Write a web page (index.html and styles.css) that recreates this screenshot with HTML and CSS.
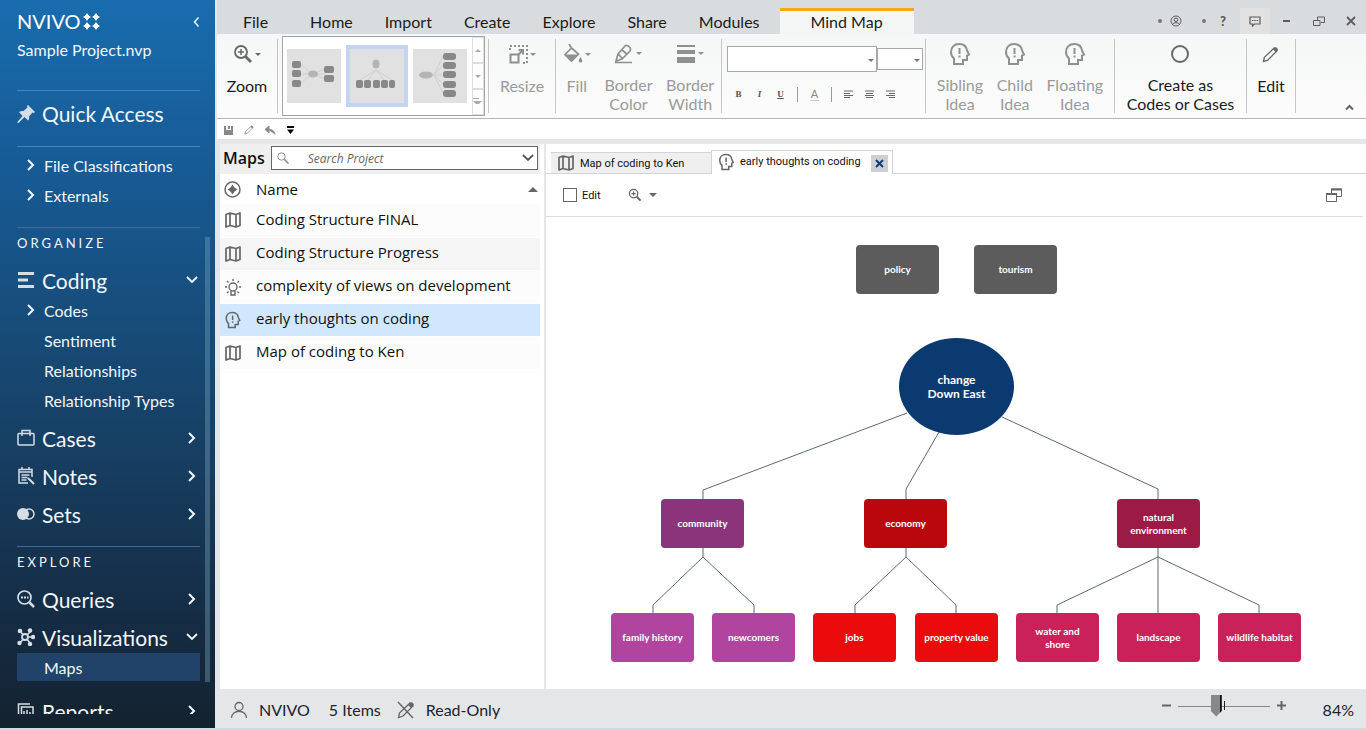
FILE: index.html
```html
<!DOCTYPE html>
<html lang="en">
<head>
    <meta charset="UTF-8">
    <meta name="viewport" content="width=device-width, initial-scale=1.0">
    <title>NVivo - Sample Project.nvp</title>
    <link rel="stylesheet" href="styles.css">
</head>
<body>

<!-- Shared icons -->
<svg class="sprite" aria-hidden="true">
    <symbol id="chevron-right" viewBox="0 0 10 12"><path d="M2 1l5 5-5 5" fill="none" stroke="currentColor" stroke-width="2"/></symbol>
    <symbol id="chevron-down" viewBox="0 0 12 10"><path d="M1 2l5 5 5-5" fill="none" stroke="currentColor" stroke-width="1.8"/></symbol>
    <symbol id="map" viewBox="0 0 18 18"><path d="M2 3.500l4-1.500 6 1.500L16 2v12.500l-4 1.500-6-1.500L2 16zM6 2v12.500M12 3.500V16" fill="none" stroke="currentColor" stroke-width="1.700" stroke-linejoin="round"/></symbol>
    <symbol id="head" viewBox="0 0 22 24"><path d="M5 22v-5.500C2.500 14.500 2 12.500 2 10c0-5 3.500-8 8-8 4.500 0 7.500 2.500 8 6.500l2 4-2 1V18h-4v4z" fill="none" stroke="currentColor" stroke-width="2"/><path d="M10.500 6v6M10.500 13.500v2" stroke="currentColor" stroke-width="2"/></symbol>
    <symbol id="zoom-in" viewBox="0 0 20 20"><circle cx="8" cy="8" r="6" fill="none" stroke="currentColor" stroke-width="1.800"/><path d="M8 5v6M5 8h6" stroke="currentColor" stroke-width="1.500"/><path d="M12.500 12.500L18 18" stroke="currentColor" stroke-width="2.800"/></symbol>
    <symbol id="pencil" viewBox="0 0 18 18"><path d="M1.500 16.500l1-4.500L13 2l3 3L6 15z" fill="none" stroke="currentColor" stroke-width="1.400"/><path d="M11.500 3.500l2-2c1.500-1 4 1.500 3 3l-2 2z" fill="currentColor"/></symbol>
    <symbol id="windows" viewBox="0 0 16 14"><path d="M5.500 5V1h10v7.500H11M.500 5.500h10v8H.500z" fill="none" stroke="currentColor"/><path d="M5 1.500h11M0 6h11" stroke="currentColor" stroke-width="2"/></symbol>
</svg>

<div class="app">
    <div class="main">
        <aside class="sidebar">
            <div class="brand">
                <svg class="logo" viewBox="0 -6 84 30" role="img" aria-label="NVivo">
                    <text class="logo-text" x="0" y="16">NVIVO</text>
                    <g fill="#fff">
                        <path d="M70 0l1.500 2.500L74 4l-2.500 1.500L70 8l-1.500-2.500L66 4l2.500-1.500zM79 0l1.500 2.500L83 4l-2.500 1.500L79 8l-1.500-2.500L75 4l2.500-1.500zM70 9l1.500 2.500L74 13l-2.500 1.500L70 17l-1.500-2.500L66 13l2.500-1.500zM79 9l1.500 2.500L83 13l-2.500 1.500L79 17l-1.500-2.500L75 13l2.500-1.500z"/>
                        <circle cx="70" cy="4" r="2.400"/><circle cx="79" cy="4" r="2.400"/><circle cx="70" cy="13" r="2.400"/><circle cx="79" cy="13" r="2.400"/>
                    </g>
                </svg>
                <button class="collapse" aria-label="Collapse navigation"><svg width="7" height="12" viewBox="0 0 7 12"><path d="M5.500 1.500l-4 4.500 4 4.500" fill="none" stroke="currentColor" stroke-width="1.500"/></svg></button>
            </div>
            <div class="project">Sample Project.nvp</div>
            <a class="nav-head quick" href="#">
                <svg class="nav-icon" viewBox="0 0 18 18"><path d="M11 0l7 7-1.500 1-1-.500-3.500 4c.500 1.500 0 3-1 4L7.500 12 1.500 18 0 17.500l5.500-6.500L2 7c1.500-1 3-1.200 4.500-1L10.500 2.500 10 1z" fill="currentColor"/></svg>
                Quick Access
            </a>
            <nav class="nav">
                <a class="nav-sub" href="#"><svg class="arrow"><use href="#chevron-right"/></svg>File Classifications</a>
                <a class="nav-sub" href="#"><svg class="arrow"><use href="#chevron-right"/></svg>Externals</a>

                <h2 class="nav-title">ORGANIZE</h2>
                <a class="nav-head open" href="#">
                    <svg class="nav-icon" viewBox="0 0 18 18"><path d="M1 2.500h16M1 9h10M1 15.500h16" stroke="currentColor" stroke-width="3"/></svg>
                    Coding<svg class="toggle"><use href="#chevron-down"/></svg>
                </a>
                <a class="nav-sub" href="#"><svg class="arrow"><use href="#chevron-right"/></svg>Codes</a>
                <a class="nav-sub" href="#">Sentiment</a>
                <a class="nav-sub" href="#">Relationships</a>
                <a class="nav-sub" href="#">Relationship Types</a>
                <a class="nav-head" href="#">
                    <svg class="nav-icon" viewBox="0 0 18 18" fill="none" stroke="currentColor" stroke-width="1.500"><rect x="1" y="4.500" width="16" height="11.500" rx="1"/><path d="M5 7V1.500h8V7"/></svg>
                    Cases<svg class="toggle"><use href="#chevron-right"/></svg>
                </a>
                <a class="nav-head" href="#">
                    <svg class="nav-icon" viewBox="0 0 18 18" fill="none" stroke="currentColor" stroke-width="1.500"><path d="M15 10V2.500H2V16h9M2 5h13M4.500 8h8M4.500 10.500h6M4.500 13h5M5 0v3M12 0v3"/><path d="M11 11l6 6" stroke-width="2"/></svg>
                    Notes<svg class="toggle"><use href="#chevron-right"/></svg>
                </a>
                <a class="nav-head" href="#">
                    <svg class="nav-icon" viewBox="0 0 18 18"><circle cx="12" cy="9" r="5" fill="none" stroke="currentColor" stroke-width="1.500"/><circle cx="6" cy="9" r="6" fill="currentColor"/></svg>
                    Sets<svg class="toggle"><use href="#chevron-right"/></svg>
                </a>

                <h2 class="nav-title">EXPLORE</h2>
                <a class="nav-head" href="#">
                    <svg class="nav-icon" viewBox="0 0 18 18"><circle cx="7.500" cy="7.500" r="6.500" fill="none" stroke="currentColor" stroke-width="1.700"/><path d="M4 7.500h2M7 7.500h2M10 7.500h1.500" stroke="currentColor" stroke-width="2"/><path d="M12.500 12.500l4.500 4.500" stroke="currentColor" stroke-width="2.500"/></svg>
                    Queries<svg class="toggle"><use href="#chevron-right"/></svg>
                </a>
                <a class="nav-head open" href="#">
                    <svg class="nav-icon" viewBox="0 0 18 18"><path d="M8 9L3 3M8 9l6-6M8 9h8M8 9l6 7M8 9l-5 6" stroke="currentColor" stroke-width="1.500"/><circle cx="8" cy="9" r="3" fill="#17344f" stroke="currentColor" stroke-width="1.800"/><g fill="currentColor"><circle cx="3" cy="3" r="2.300"/><circle cx="13" cy="2.500" r="2.300"/><circle cx="16" cy="9" r="2.200"/><circle cx="13" cy="16" r="2.200"/><circle cx="2.500" cy="15" r="2.200"/></g></svg>
                    Visualizations<svg class="toggle"><use href="#chevron-down"/></svg>
                </a>
                <a class="nav-sub active" href="#">Maps</a>
                <a class="nav-head" href="#">
                    <svg class="nav-icon" viewBox="0 0 18 18" fill="none" stroke="currentColor" stroke-width="1.500"><path d="M1.500 13V2H13M4.500 5H16v11H4.500zM7 14V9M10 14V8M13 14v-4"/></svg>
                    Reports<svg class="toggle"><use href="#chevron-right"/></svg>
                </a>
            </nav>
            <div class="nav-scrollbar"></div>
        </aside>

        <div class="workspace">
            <header class="menubar">
                <button class="menu file">File</button>
                <button class="menu">Home</button>
                <button class="menu">Import</button>
                <button class="menu">Create</button>
                <button class="menu">Explore</button>
                <button class="menu">Share</button>
                <button class="menu">Modules</button>
                <button class="menu current">Mind Map</button>
                <div class="window-tools">
                    <span class="dot"></span>
                    <button class="tool account" aria-label="Account"><svg width="12" height="12" viewBox="0 0 12 12" fill="none" stroke="currentColor"><circle cx="6" cy="6" r="5"/><circle cx="6" cy="4.800" r="1.800"/><path d="M2.500 9.500c1.500-2.500 5.500-2.500 7 0"/></svg></button>
                    <span class="dot"></span>
                    <button class="tool help" aria-label="Help">?</button>
                    <button class="tool feedback" aria-label="Feedback"><svg width="12" height="11" viewBox="0 0 12 11" fill="none" stroke="currentColor" stroke-width="1.200"><path d="M1 1h10v7H5.500L3.500 10V8H1z"/><path d="M3 4.500h1.500M5.300 4.500h1.500M7.600 4.500h1.500"/></svg></button>
                    <button class="tool" aria-label="Minimize"><svg width="8" height="8" viewBox="0 0 8 8"><path d="M0 4h7" stroke="currentColor" stroke-width="2"/></svg></button>
                    <button class="tool" aria-label="Restore"><svg width="12" height="11" viewBox="0 0 12 11" fill="none" stroke="currentColor"><path d="M4.500 4V1h7v5.500H8M.500 4.500H7v5H.500z"/></svg></button>
                    <button class="tool" aria-label="Close"><svg width="10" height="10" viewBox="0 0 10 10"><path d="M1 1l8 8M9 1L1 9" stroke="currentColor" stroke-width="1.800"/></svg></button>
                </div>
            </header>

            <div class="ribbon">
                <div class="group zoom">
                    <button class="command"><span class="glyph"><svg width="20" height="20"><use href="#zoom-in"/></svg><i class="caret"></i></span>Zoom</button>
                </div>
                <div class="group layouts">
                    <div class="gallery">
                        <button class="layout" aria-label="Left and right layout">
                            <svg viewBox="0 0 54 54"><path d="M14 15l11 10 13-5M14 25h24M14 34l11-9 13 5" fill="none" stroke="#d0d0d0"/><ellipse cx="26" cy="25" rx="5" ry="3.500" fill="#b4b4b4"/><g fill="#888"><rect x="5" y="12" width="9" height="7" rx="2"/><rect x="5" y="21" width="9" height="7" rx="2"/><rect x="5" y="31" width="9" height="7" rx="2"/><rect x="37" y="17" width="10" height="7" rx="2"/><rect x="37" y="26" width="10" height="7" rx="2"/></g></svg>
                        </button>
                        <button class="layout selected" aria-label="Top down layout">
                            <svg viewBox="0 0 54 54"><path d="M10 31l16-10 16 10M18 31l8-10 8 10" fill="none" stroke="#d0d0d0"/><ellipse cx="26" cy="15" rx="3.500" ry="4.500" fill="#b4b4b4"/><g fill="#888"><rect x="6" y="31" width="7" height="8" rx="2"/><rect x="14" y="31" width="7" height="8" rx="2"/><rect x="23" y="31" width="7" height="8" rx="2"/><rect x="31" y="31" width="7" height="8" rx="2"/><rect x="39" y="31" width="6" height="8" rx="2"/></g></svg>
                        </button>
                        <button class="layout" aria-label="Left to right layout">
                            <svg viewBox="0 0 54 54"><path d="M30 7l-9 19 9 18M30 16l-9 10 9 9M20 26h10" fill="none" stroke="#d0d0d0"/><ellipse cx="13" cy="26" rx="7" ry="3.500" fill="#b4b4b4"/><g fill="#888"><rect x="30" y="4" width="13" height="7" rx="3"/><rect x="30" y="13" width="13" height="7" rx="3"/><rect x="30" y="22" width="13" height="7" rx="3"/><rect x="30" y="32" width="13" height="7" rx="3"/><rect x="30" y="41" width="13" height="7" rx="3"/></g></svg>
                        </button>
                        <div class="gallery-nav">
                            <button aria-label="Previous layouts"><i class="caret up"></i></button>
                            <button aria-label="Next layouts"><i class="caret"></i></button>
                            <button class="more" aria-label="All layouts"><i class="caret"></i></button>
                        </div>
                    </div>
                </div>
                <div class="group resize">
                    <button class="command" disabled><span class="glyph"><svg width="19" height="19" viewBox="0 0 19 19" fill="none" stroke="currentColor" stroke-width="2"><path d="M1 5V1h17v17h-6" stroke-dasharray="2 2"/><path d="M1.500 9.500h8v8h-8z"/><path d="M9 10l4-4M9.500 5H14v4.500"/></svg><i class="caret"></i></span>Resize</button>
                </div>
                <div class="group shape">
                    <button class="command" disabled><span class="glyph"><svg width="20" height="20" viewBox="0 0 20 20"><path d="M6 0l3 5M8.500 4L2 10.500 8.500 17l7-7z" fill="none" stroke="currentColor" stroke-width="1.700"/><path d="M1 10.500h14.500L8.500 18zM17.500 13c3 4.500 1.500 5.500 0 5.500s-3-1 0-5.500z" fill="currentColor"/></svg><i class="caret"></i></span>Fill</button>
                    <button class="command" disabled><span class="glyph"><svg width="20" height="20" viewBox="0 0 20 20" fill="none" stroke="currentColor" stroke-width="1.700"><path d="M2 17l2-7 7-8c2-2 7 2 5 5l-8 8zM4 10l5 5M8 6l5.500 4.500M1 18.500h17"/></svg><i class="caret"></i></span>Border<br>Color</button>
                    <button class="command" disabled><span class="glyph"><svg width="20" height="20" viewBox="0 0 20 20" fill="currentColor"><path d="M1 1h18v2H1zM1 6h18v4H1zM1 13h18v6H1z"/></svg><i class="caret"></i></span>Border<br>Width</button>
                </div>
                <div class="group font">
                    <div class="font-row">
                        <span class="combo name"><select aria-label="Font"><option></option></select><i class="caret"></i></span>
                        <span class="combo size"><select aria-label="Font size"><option></option></select><i class="caret"></i></span>
                    </div>
                    <div class="font-row format">
                        <button class="bold">B</button>
                        <button class="italic">I</button>
                        <button class="underline">U</button>
                        <i class="rule"></i>
                        <button class="color">A</button>
                        <i class="rule"></i>
                        <button aria-label="Align left"><svg width="9" height="8"><path d="M0 1h9M0 3.500h6M0 5.500h9M0 7.500h6" stroke="#666"/></svg></button>
                        <button aria-label="Align center"><svg width="9" height="8"><path d="M0 1h9M1 3.500h7M0 5.500h9M1 7.500h7" stroke="#666"/></svg></button>
                        <button aria-label="Align right"><svg width="9" height="8"><path d="M0 1h9M3 3.500h6M0 5.500h9M3 7.500h6" stroke="#666"/></svg></button>
                    </div>
                </div>
                <div class="group ideas">
                    <button class="command" disabled><span class="glyph"><svg width="22" height="24"><use href="#head"/></svg></span>Sibling<br>Idea</button>
                    <button class="command" disabled><span class="glyph"><svg width="22" height="24"><use href="#head"/></svg></span>Child<br>Idea</button>
                    <button class="command" disabled><span class="glyph"><svg width="22" height="24"><use href="#head"/></svg></span>Floating<br>Idea</button>
                </div>
                <div class="group create">
                    <button class="command"><span class="glyph"><svg width="20" height="20"><circle cx="10" cy="10" r="8" fill="none" stroke="currentColor" stroke-width="2"/></svg></span>Create as<br>Codes or Cases</button>
                </div>
                <div class="group edit">
                    <button class="command"><span class="glyph"><svg width="17" height="17"><use href="#pencil"/></svg></span>Edit</button>
                </div>
                <button class="ribbon-toggle" aria-label="Collapse ribbon"><svg width="9" height="7" viewBox="0 0 9 7"><path d="M1 5.500L4.500 2 8 5.500" fill="none" stroke="currentColor" stroke-width="2"/></svg></button>
            </div>

            <div class="quickbar">
                <button aria-label="Save"><svg width="9" height="9" viewBox="0 0 9 9"><path d="M0 0h2v4h5V0h2v9H0z" fill="currentColor"/><path d="M4 0h2v3H4z" fill="currentColor"/></svg></button>
                <button aria-label="Edit"><svg width="10" height="10"><use href="#pencil"/></svg></button>
                <button aria-label="Undo"><svg width="11" height="9" viewBox="0 0 11 9"><path d="M4 0L0 3.500 4 7zM3 3.500c4-.500 6.500 1.500 7 5" fill="currentColor" stroke="currentColor" fill-rule="evenodd"/></svg></button>
                <button class="customize" aria-label="Customize toolbar"><svg width="7" height="8" viewBox="0 0 7 8"><path d="M0 0h7v2H0zM0 3.500h7L3.500 8z" fill="currentColor"/></svg></button>
            </div>

            <div class="panes">
                <section class="list-pane">
                    <form class="list-head">
                        <label for="search">Maps</label>
                        <div class="search">
                            <svg width="12" height="12" viewBox="0 0 12 12" fill="none" stroke="#888"><circle cx="4.500" cy="4.500" r="3.700"/><path d="M7.500 7.500l4 4" stroke-width="1.500"/></svg>
                            <input type="search" id="search" placeholder="Search Project">
                            <button type="button" aria-label="Search options"><svg width="12" height="10"><use href="#chevron-down"/></svg></button>
                        </div>
                    </form>
                    <table class="items">
                        <thead>
                            <tr>
                                <th class="icon"><svg width="17" height="17" viewBox="0 0 17 17"><circle cx="8.500" cy="8.500" r="7.500" fill="none" stroke="currentColor" stroke-width="1.500"/><path d="M8.500 3.500l2 3 3 2-3 2-2 3-2-3-3-2 3-2z" fill="currentColor"/></svg></th>
                                <th>Name<i class="caret up"></i></th>
                            </tr>
                        </thead>
                        <tbody>
                            <tr><td class="icon"><svg width="18" height="18"><use href="#map"/></svg></td><td>Coding Structure FINAL</td></tr>
                            <tr class="alt"><td class="icon"><svg width="18" height="18"><use href="#map"/></svg></td><td>Coding Structure Progress</td></tr>
                            <tr><td class="icon"><svg width="18" height="18" viewBox="0 0 18 18" fill="none" stroke="currentColor" stroke-width="1.400"><circle cx="9" cy="9" r="4"/><path d="M7 13v4h4v-4M9 1v2M1 9h2M15 9h2M3 3l1.500 1.500M15 3l-1.500 1.500M3 15l1.500-1.500M15 15l-1.500-1.500"/></svg></td><td>complexity of views on development</td></tr>
                            <tr class="selected"><td class="icon"><svg width="18" height="18"><use href="#head"/></svg></td><td>early thoughts on coding</td></tr>
                            <tr><td class="icon"><svg width="18" height="18"><use href="#map"/></svg></td><td>Map of coding to Ken</td></tr>
                        </tbody>
                    </table>
                </section>

                <section class="detail-pane">
                    <div class="doc-tabs">
                        <div class="doc-tab"><svg width="18" height="18"><use href="#map"/></svg><a href="#">Map of coding to Ken</a></div>
                        <div class="doc-tab current"><svg width="17" height="18"><use href="#head"/></svg><a href="#">early thoughts on coding</a><button aria-label="Close tab"><svg width="9" height="9" viewBox="0 0 9 9"><path d="M1 1l7 7M8 1L1 8" stroke="#0d3a80" stroke-width="2"/></svg></button></div>
                    </div>
                    <div class="doc-tools">
                        <label><input type="checkbox">Edit</label>
                        <button class="doc-zoom" aria-label="Zoom"><svg width="14" height="14"><use href="#zoom-in"/></svg><i class="caret"></i></button>
                        <button class="undock" aria-label="Undock"><svg width="16" height="14"><use href="#windows"/></svg></button>
                    </div>
                    <div class="canvas">
                        <svg class="links" width="820" height="470" fill="none" stroke="#5b6b70">
                            <path d="M361 196L157 273v10M393 215l-33 57v11M456 200l156 72v11"/>
                            <path d="M157 331v9l-50 48v8M157 340l51 48v8"/>
                            <path d="M360 331v9l-51 48v8M360 340l50 48v8"/>
                            <path d="M612 331v65M612 340l-101 48v8M612 340l101 48v8"/>
                        </svg>
                        <div class="node grey policy">policy</div>
                        <div class="node grey tourism">tourism</div>
                        <div class="node root">change<br>Down East</div>
                        <div class="node purple community">community</div>
                        <div class="node red economy">economy</div>
                        <div class="node crimson natural">natural<br>environment</div>
                        <div class="node leaf orchid family">family history</div>
                        <div class="node leaf orchid newcomers">newcomers</div>
                        <div class="node leaf scarlet jobs">jobs</div>
                        <div class="node leaf scarlet property">property value</div>
                        <div class="node leaf rose water">water and<br>shore</div>
                        <div class="node leaf rose landscape">landscape</div>
                        <div class="node leaf rose wildlife">wildlife habitat</div>
                    </div>
                </section>
            </div>

            <footer class="statusbar">
                <svg width="18" height="18" viewBox="0 0 18 18" fill="none" stroke="currentColor" stroke-width="1.300"><circle cx="9" cy="5.500" r="4"/><path d="M1.500 17c0-9 15-9 15 0"/></svg>
                <span class="user">NVIVO</span>
                <span class="count">5 Items</span>
                <svg width="18" height="18" viewBox="0 0 18 18"><path d="M1.500 16.500l1-4.500L13 2l3 3L6 15z" fill="none" stroke="currentColor" stroke-width="1.300"/><path d="M11 4l2.500-2.500c1.500-1 4 1.500 3 3L14 7z" fill="currentColor"/><path d="M1 1l15 16" stroke="currentColor" stroke-width="1.500"/></svg>
                <span class="mode">Read-Only</span>
                <div class="zoom-bar">
                    <button aria-label="Zoom out"><svg width="9" height="9"><path d="M0 4.500h9" stroke="currentColor" stroke-width="2"/></svg></button>
                    <input type="range" aria-label="Zoom level" min="0" max="100" value="41">
                    <button aria-label="Zoom in"><svg width="9" height="9"><path d="M0 4.500h9M4.500 0v9" stroke="currentColor" stroke-width="2"/></svg></button>
                    <output>84%</output>
                </div>
            </footer>
        </div>
    </div>
    <div class="edge"></div>
</div>

</body>
</html>
```

FILE: styles.css
```css
* {
    box-sizing: border-box;
}

body {
    margin: 0;
    font-family: Lato, sans-serif;
    font-size: 16px;
    color: #1b1b1b;
}

button {
    padding: 0;
    border: none;
    background: none;
    font: inherit;
    color: inherit;
    cursor: pointer;
}

a {
    color: inherit;
    text-decoration: none;
}

svg {
    display: block;
    flex-shrink: 0;
}

.sprite {
    display: none;
}

.app {
    display: flex;
    flex-direction: column;
    height: 100vh;
    overflow: hidden;
}

.main {
    display: flex;
    flex: 1;
    min-height: 0;
}

.edge {
    height: 2px;
    background-color: #c9dbe4;
}

.caret {
    border: 3px solid transparent;
    border-top-color: currentColor;
    border-bottom: 0;
}

.caret.up {
    border-top: 0;
    border-bottom: 3px solid currentColor;
}

/* Sidebar */
.sidebar {
    position: relative;
    display: flex;
    flex-direction: column;
    width: 215px;
    flex-shrink: 0;
    padding: 7px 15px 14px 17px;
    background: linear-gradient(#186cae, #175a94 24%, #174872 50%, #152c44 85%, #14222f);
    color: #f2f6fa;
}

.brand {
    display: flex;
    justify-content: space-between;
    align-items: center;
    height: 30px;
}

.logo {
    width: 84px;
    height: 30px;
}

.logo-text {
    font-size: 20px;
    font-weight: 400;
    fill: #fff;
}

.project {
    margin-top: 3px;
    height: 51px;
    line-height: 20px;
    border-bottom: 1px solid #4486bd;
}

.nav-head {
    display: flex;
    align-items: center;
    gap: 7px;
    height: 30px;
    margin-top: 8px;
    font-size: 21px;
}

.nav-head.quick {
    height: 56px;
    margin: 0;
    padding-bottom: 10px;
    border-bottom: 1px solid #4486bd;
    flex-shrink: 0;
}

.nav-icon {
    width: 18px;
    height: 18px;
    color: #d6dde5;
}

.toggle {
    width: 12px;
    height: 12px;
    margin: 0 2px 0 auto;
}

.nav {
    flex: 1;
    min-height: 0;
    padding-top: 3px;
    overflow: hidden;
}

.nav-sub {
    display: flex;
    align-items: center;
    height: 30px;
    padding-left: 27px;
}

.nav-sub .arrow {
    width: 10px;
    height: 12px;
    margin: 0 8px 0 -18px;
}

.nav-sub.active {
    height: 28px;
    margin: 1px 0 15px;
    background-color: #21436a;
}

.nav-title {
    margin: 17px 0 13px;
    padding-top: 6px;
    border-top: 1px solid #3d6d95;
    font-size: 13px;
    font-weight: 400;
    line-height: 18px;
    letter-spacing: 3px;
}

.nav-scrollbar {
    position: absolute;
    top: 237px;
    right: 5px;
    bottom: 46px;
    width: 5px;
    background-color: rgba(120, 165, 190, 0.4);
}

/* Menu bar */
.workspace {
    display: flex;
    flex-direction: column;
    flex: 1;
    min-width: 0;
    background-color: #e5e6e8;
    border-left: 2px solid #e5e6e8;
}

.menubar {
    display: flex;
    height: 34px;
    padding-left: 10px;
    background-color: #d9dcdf;
}

.menu {
    padding: 8px 16px 0;
}

.menu.file {
    margin-right: 10px;
}

.menu.current {
    height: 26px;
    margin: 8px 0 0 4px;
    padding: 0 31px 2px;
    background-color: #f4f6f6;
    border-top: 3px solid #fba60f;
}

.window-tools {
    display: flex;
    align-items: center;
    margin-left: auto;
    padding: 8px 0 0;
    color: #5c5c5c;
}

.dot {
    width: 4px;
    height: 4px;
    border-radius: 50%;
    background-color: #777;
}

.tool {
    display: flex;
    align-items: center;
    justify-content: center;
    width: 30px;
    height: 26px;
    margin-left: 2px;
}

.tool.account {
    width: 24px;
    margin-right: 14px;
}

.tool.help {
    font-size: 13px;
    font-weight: 900;
}

.tool.feedback {
    background-color: #e1e1e1;
}

/* Ribbon */
.ribbon {
    display: flex;
    height: 85px;
    padding: 5px 0;
    background: linear-gradient(#f5f6f6, #fcfcfc);
    border-bottom: 1px solid #b4b4b4;
}

.group {
    display: flex;
    justify-content: space-around;
    height: 74px;
    border-right: 1px solid #c6c6c6;
}

.command {
    display: flex;
    flex-direction: column;
    align-items: center;
    line-height: 19px;
}

.command:disabled {
    color: #9a9a9a;
}

.glyph {
    display: flex;
    align-items: center;
    justify-content: center;
    gap: 2px;
    height: 30px;
    margin-bottom: 7px;
    color: #686868;
}

.command:disabled .glyph {
    color: #8f8f8f;
}

.group.zoom { width: 61px; }
.group.resize { width: 67px; }
.group.shape { width: 166px; }
.group.ideas { width: 189px; padding: 0 4px; }
.group.create { width: 132px; }
.group.edit { width: 49px; }

.layouts {
    width: 211px;
}

.gallery {
    display: flex;
    align-items: center;
    gap: 4px;
    width: 203px;
    height: 80px;
    margin-top: -3px;
    padding-left: 3px;
    background-color: #fff;
    border: 1px solid #a5a5a5;
}

.layout {
    border: 1px solid transparent;
}

.layout svg {
    width: 54px;
    height: 54px;
    background-color: #e1e1e1;
}

.layout.selected {
    border: 4px solid #c3d5f0;
}

.gallery-nav {
    display: flex;
    flex-direction: column;
    align-self: stretch;
    flex: 1;
    color: #a9a9a9;
}

.gallery-nav button {
    display: flex;
    flex: 1;
    align-items: center;
    justify-content: center;
    border: 1px solid #dedede;
}

.gallery-nav .more .caret::before {
    content: "";
    display: block;
    width: 6px;
    height: 1px;
    margin: -6px 0 0 -3px;
    background-color: currentColor;
}

.group.font {
    display: block;
    width: 204px;
    padding: 7px 0 0 5px;
}

.font-row {
    display: flex;
    align-items: center;
}

.combo {
    position: relative;
    display: flex;
    color: #777;
}

.combo select {
    width: 100%;
    height: 26px;
    appearance: none;
    background-color: #fff;
    border: 1px solid #a8a8a8;
    border-radius: 0;
}

.combo.name { width: 150px; }
.combo.size { width: 46px; }
.combo.size select { height: 22px; }

.combo .caret {
    position: absolute;
    right: 3px;
    top: 50%;
}

.format {
    height: 44px;
    padding-left: 7px;
    gap: 12px;
    font-family: "Liberation Serif", serif;
    font-size: 9px;
    color: #555;
}

.format button {
    min-width: 9px;
}

.format .bold { font-weight: bold; }
.format .italic { font-style: italic; font-weight: bold; }
.format .underline { font-weight: bold; text-decoration: underline; }
.format .color { font-family: Lato, sans-serif; font-size: 11px; color: #888; border-bottom: 1px solid #ccc; }

.rule {
    height: 15px;
    border-left: 1px solid #999;
}

.ribbon-toggle {
    align-self: flex-end;
    margin: 0 12px 2px auto;
    color: #666;
}

.quickbar {
    display: flex;
    align-items: center;
    gap: 11px;
    height: 20px;
    padding: 2px 0 0 7px;
    background-color: #fff;
    color: #888;
}

.quickbar .customize {
    color: #000;
}

/* List of maps */
.panes {
    display: flex;
    flex: 1;
    gap: 2px;
    min-height: 0;
    padding: 5px 0 0 3px;
}

.list-pane {
    width: 324px;
    flex-shrink: 0;
    padding-right: 4px;
    background-color: #fff;
    font-family: "Open Sans", sans-serif;
    font-size: 15px;
    color: #111;
}

.list-head {
    display: flex;
    align-items: center;
    gap: 6px;
    height: 30px;
    padding: 0 2px 2px 3px;
    background-color: #efefef;
    font-size: 16px;
    font-weight: 600;
}

.search {
    display: flex;
    flex: 1;
    align-items: center;
    height: 24px;
    padding: 0 3px 0 5px;
    background-color: #fff;
    border: 1px solid #666;
    color: #555;
}

.search input {
    flex: 1;
    min-width: 0;
    padding: 0 0 0 19px;
    border: none;
    outline: none;
    background: none;
    font-family: "Open Sans", sans-serif;
    font-size: 12px;
    font-style: italic;
}

.search input::placeholder {
    color: #666;
}

.items {
    width: 100%;
    border-collapse: collapse;
}

.items th {
    height: 30px;
    padding: 0;
    font-weight: 400;
    text-align: left;
}

.items th .caret {
    float: right;
    margin: 8px 2px 0 0;
    border-width: 0 5px 5px;
    color: #666;
}

.items td {
    height: 33px;
    padding: 0 0 3px;
    background-color: #fcfcfc;
    border-bottom: 1px solid #fff;
}

.items .alt td {
    background-color: #f5f5f5;
}

.items .selected td {
    background-color: #d1e7fd;
}

.items .icon {
    width: 36px;
    padding: 0 0 0 4px;
    color: #666;
}

/* Open documents */
.detail-pane {
    display: flex;
    flex-direction: column;
    flex: 1;
    min-width: 0;
    background-color: #fff;
    font-family: Roboto, sans-serif;
    font-size: 11px;
    color: #111;
}

.doc-tabs {
    display: flex;
    align-items: flex-end;
    height: 30px;
    padding-left: 5px;
    border-bottom: 1px solid #d4d4d4;
}

.doc-tab {
    display: flex;
    align-items: center;
    gap: 5px;
    width: 160px;
    height: 21px;
    padding-left: 6px;
    background-color: #efefef;
    border-top: 1px solid #d4d4d4;
    white-space: nowrap;
}

.doc-tab svg {
    color: #666;
}

.doc-tab.current {
    width: 182px;
    height: 24px;
    margin-bottom: -1px;
    padding: 0 4px 2px 6px;
    background-color: #fff;
    border: 1px solid #d4d4d4;
    border-bottom: none;
}

.doc-tab button {
    margin: 3px 0 0 auto;
    padding: 4px;
    background-color: #cfcfcf;
}

.doc-tools {
    display: flex;
    align-items: center;
    height: 43px;
    padding: 0 21px 0 17px;
    border-bottom: 1px solid #dcdcdc;
    margin-right: 3px;
    color: #666;
}

.doc-tools label {
    display: flex;
    align-items: center;
    gap: 5px;
    color: #111;
}

.doc-tools input {
    width: 14px;
    height: 14px;
    margin: 0;
    appearance: none;
    border: 1px solid #666;
}

.doc-zoom {
    display: flex;
    align-items: center;
    gap: 7px;
    margin-left: 27px;
}

.doc-zoom .caret {
    border-width: 4px 4px 0;
}

.undock {
    margin-left: auto;
}

/* Mind map */
.canvas {
    position: relative;
    flex: 1;
    overflow: hidden;
}

.links {
    position: absolute;
    top: 0;
    left: 0;
}

.node {
    position: absolute;
    display: flex;
    align-items: center;
    justify-content: center;
    width: 83px;
    height: 49px;
    border-radius: 4px;
    font-family: Lato, sans-serif;
    font-size: 10px;
    font-weight: 700;
    line-height: 13px;
    text-align: center;
    color: #fff;
}

.node.root {
    top: 121px;
    left: 353px;
    width: 115px;
    height: 97px;
    border-radius: 50%;
    background-color: #0b3a70;
    font-size: 12px;
    line-height: 14px;
}

.leaf { top: 396px; }

.grey { background-color: #5c5c5c; }
.purple { background-color: #8b347c; }
.red { background-color: #ba070b; }
.crimson { background-color: #9b1a46; }
.orchid { background-color: #b0449e; }
.scarlet { background-color: #eb0a0c; }
.rose { background-color: #ca215b; }

.policy { top: 28px; left: 310px; }
.tourism { top: 28px; left: 428px; }
.community { top: 282px; left: 115px; }
.economy { top: 282px; left: 318px; }
.natural { top: 282px; left: 571px; }
.family { left: 65px; }
.newcomers { left: 166px; }
.jobs { left: 267px; }
.property { left: 369px; }
.water { left: 470px; }
.landscape { left: 571px; }
.wildlife { left: 672px; }

/* Status bar */
.statusbar {
    display: flex;
    align-items: center;
    height: 39px;
    padding: 2px 12px 0 13px;
    color: #1b2430;
}

.statusbar svg {
    color: #666;
}

.user { margin: 0 19px 0 11px; }
.count { margin-right: 16px; }
.mode { margin-left: 11px; }

.zoom-bar {
    display: flex;
    align-items: center;
    gap: 7px;
    margin-left: auto;
}

.zoom-bar button {
    margin-bottom: 8px;
}

.zoom-bar input {
    width: 92px;
    height: 22px;
    margin: 0 0 8px;
    appearance: none;
    background: linear-gradient(#222, #222) 46px 6px / 1px 9px no-repeat, linear-gradient(#888, #888) 0 11px / 100% 1px no-repeat;
}

.zoom-bar input::-webkit-slider-thumb {
    appearance: none;
    width: 11px;
    height: 22px;
    background: linear-gradient(90deg, #888 80%, #111 80%);
    clip-path: polygon(0 0, 100% 0, 100% 75%, 50% 100%, 0 75%);
}

.zoom-bar output {
    margin-left: 30px;
}
```
